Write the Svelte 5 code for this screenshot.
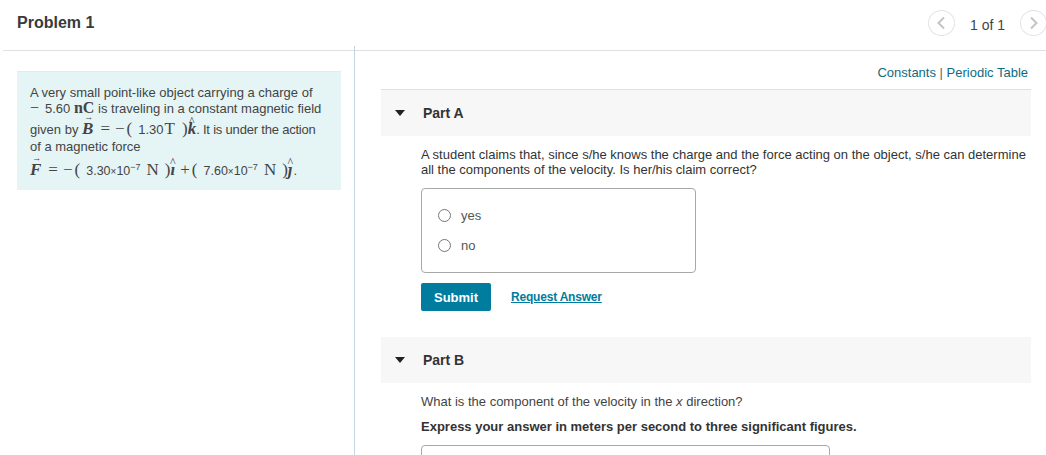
<script>
	let answer = $state('');
	const choices = ['yes', 'no'];
</script>

<div class="page">
	<header class="top">
		<h1>Problem 1</h1>
		<nav class="pager">
			<button class="arrow" aria-label="Previous">
				<svg width="10" height="14" viewBox="0 0 10 14"><path d="M8 1.5 2.5 7 8 12.5" /></svg>
			</button>
			<span>1 of 1</span>
			<button class="arrow" aria-label="Next">
				<svg width="10" height="14" viewBox="0 0 10 14"><path d="M2 1.5 7.5 7 2 12.5" /></svg>
			</button>
		</nav>
	</header>

	<div class="columns">
		<aside class="side">
			<div class="intro">
				<div class="line">A very small point-like object carrying a charge of</div>
				<div class="line second"><span class="m minus">−</span>5.60 <span class="m b">nC</span> is traveling in a constant magnetic field</div>
				<div class="line third">given by <span class="acc vec v">B</span><span class="m op">=</span><span class="m">−</span><span class="m paren">(</span>1.30<span class="m unit">T</span><span class="m paren-end">)</span><span class="acc hat v">k</span><span class="tail">. It is under the action</span></div>
				<div class="line fourth">of a magnetic force</div>
				<div class="line fifth"><span class="acc vec v">F</span><span class="m op">=</span><span class="m">−</span><span class="m paren">(</span><span class="num">3.30<small>×</small>10<sup>−7</sup></span><span class="m unit">N</span><span class="m paren-end">)</span><span class="acc hat v">ı</span><span class="m plus">+</span><span class="m paren">(</span><span class="num">7.60<small>×</small>10<sup>−7</sup></span><span class="m unit">N</span><span class="m paren-end">)</span><span class="acc hat v">ȷ</span><span class="dot">.</span></div>
			</div>
		</aside>

		<main class="main">
			<div class="links"><a href="#c">Constants</a> | <a href="#p">Periodic Table</a></div>

			<section class="part first">
				<div class="part-head"><i class="caret"></i><h2>Part A</h2></div>
				<div class="part-body">
					<p class="q">A student claims that, since s/he knows the charge and the force acting on the object, s/he can determine all the components of the velocity. Is her/his claim correct?</p>
					<div class="choices">
						{#each choices as c}
							<label class="choice">
								<input type="radio" name="a" value={c} bind:group={answer} />
								<span>{c}</span>
							</label>
						{/each}
					</div>
					<div class="actions">
						<button class="submit">Submit</button>
						<a class="req" href="#r">Request Answer</a>
					</div>
				</div>
			</section>

			<section class="part">
				<div class="part-head"><i class="caret"></i><h2>Part B</h2></div>
				<div class="part-body">
					<p class="q2">What is the component of the velocity in the <em>x</em> direction?</p>
					<p class="hint">Express your answer in meters per second to three significant figures.</p>
					<div class="answer-box"></div>
				</div>
			</section>
		</main>
	</div>
</div>

<style>
	:global(body) {
		margin: 0;
		background: #fff;
	}

	.page {
		height: 455px;
		overflow: hidden;
		font-family: 'Liberation Sans', Arial, sans-serif;
		font-size: 13px;
		color: #333;
	}

	.top {
		height: 50px;
		margin-left: 3px;
		padding: 0 0 0 14px;
		display: flex;
		justify-content: space-between;
		align-items: flex-start;
		border-bottom: 1px solid #e0e0e0;
	}

	.top h1 {
		margin: 14px 0 0;
		font-size: 16px;
		line-height: 18px;
		font-weight: bold;
		color: #3a3a3a;
	}

	.pager {
		display: flex;
		align-items: center;
		margin-top: 10px;
		margin-right: -1px;
		font-size: 14px;
		color: #444;
	}

	.pager span {
		margin: 3px 15px 0 15px;
	}

	.arrow {
		width: 27px;
		height: 26px;
		padding: 0;
		border: 1px solid #e4e4e4;
		border-radius: 50%;
		background: #fff;
		display: flex;
		align-items: center;
		justify-content: center;
	}

	.arrow path {
		fill: none;
		stroke: #c4c4c4;
		stroke-width: 2;
	}

	.columns {
		display: flex;
		height: 404px;
	}

	.side {
		width: 355px;
		box-sizing: border-box;
		flex: none;
		margin-top: -5px;
		padding: 25px 13px 0 17px;
		border-right: 1px solid #c3d4e2;
		height: 415px;
	}

	.intro {
		box-sizing: border-box;
		height: 119px;
		padding: 13px 0 0 13px;
		background: #e5f5f6;
		border-top: 1px solid #e4e9e9;
		color: #444;
	}

	.line {
		height: 15px;
		line-height: 15px;
		white-space: nowrap;
	}

	.third {
		height: 20px;
		margin-top: 5px;
	}

	.fourth {
		margin-top: -1px;
	}

	.fifth {
		height: 20px;
		margin-top: 7px;
	}

	.m {
		font-family: 'Liberation Serif', 'Times New Roman', serif;
		font-size: 17px;
	}

	.minus {
		font-size: 16px;
		margin-right: 6px;
	}

	.op {
		margin: 0 5px 0 7px;
	}

	.paren {
		margin: 0 6px 0 2px;
	}

	.paren-end {
		margin-left: 6px;
	}

	.plus {
		margin-left: 5px;
	}

	.unit {
		margin-left: 6px;
	}

	.third .unit {
		margin-left: 1px;
	}

	.third .paren-end {
		margin-left: 7px;
	}

	.tail {
		letter-spacing: -0.2px;
	}

	.dot {
		margin-left: 1px;
	}

	.num {
		font-size: 12.5px;
	}

	.b {
		font-weight: bold;
		font-size: 16px;
	}

	.v {
		font-family: 'Liberation Serif', 'Times New Roman', serif;
		font-style: italic;
		font-weight: bold;
		font-size: 17px;
	}

	.acc {
		position: relative;
		display: inline-block;
		line-height: 1;
	}

	.vec::after {
		content: '→';
		position: absolute;
		left: 2px;
		right: 0;
		top: -7px;
		text-align: center;
		font-size: 9px;
		font-style: normal;
		font-weight: normal;
	}

	.hat::after {
		content: '^';
		position: absolute;
		left: -2px;
		right: -2px;
		top: -5px;
		text-align: center;
		font-size: 12px;
		font-style: normal;
		font-weight: normal;
	}

	small {
		font-size: 10px;
	}

	sup {
		font-size: 9px;
		line-height: 0;
	}

	.main {
		flex: 1;
		padding: 0 15px 0 26px;
		min-width: 0;
	}

	.links {
		height: 38px;
		box-sizing: border-box;
		padding: 15px 3px 0 0;
		text-align: right;
		line-height: 14px;
		color: #666;
	}

	.links a {
		color: #0f6b84;
		text-decoration: none;
	}

	.part-head {
		height: 46px;
		background: #f7f7f7;
		display: flex;
		align-items: center;
		padding-left: 14px;
	}

	.first .part-head {
		border-top: 1px solid #e0e0e0;
	}

	.caret {
		width: 0;
		height: 0;
		border-left: 5px solid transparent;
		border-right: 5px solid transparent;
		border-top: 6px solid #222;
	}

	.part-head h2 {
		margin: 0 0 0 18px;
		font-size: 14px;
		font-weight: bold;
		color: #333;
	}

	.part-body {
		padding: 0 0 0 40px;
	}

	.q {
		margin: 11px 0 0;
		line-height: 15px;
		color: #333;
	}

	.choices {
		box-sizing: border-box;
		width: 275px;
		height: 85px;
		margin-top: 11px;
		padding: 11px 0 0 16px;
		border: 1px solid #a8a8a8;
		border-radius: 4px;
	}

	.choice {
		display: flex;
		align-items: center;
		height: 30px;
		color: #555;
	}

	.choice input {
		appearance: none;
		width: 13px;
		height: 13px;
		margin: 0 10px 0 0;
		border: 1px solid #777;
		border-radius: 50%;
		background: #fff;
	}

	.actions {
		display: flex;
		align-items: center;
		margin-top: 10px;
	}

	.submit {
		width: 70px;
		height: 28px;
		padding: 0;
		border: none;
		border-radius: 2px;
		background: #007c9e;
		color: #fff;
		font: bold 13px 'Liberation Sans', Arial, sans-serif;
	}

	.req {
		margin-left: 20px;
		color: #007c9e;
		font-weight: bold;
		font-size: 12px;
		letter-spacing: -0.2px;
	}

	.part {
		margin-bottom: 26px;
	}

	.q2 {
		margin: 11px 0 0;
		line-height: 15px;
		color: #444;
	}

	.hint {
		margin: 10px 0 0;
		line-height: 15px;
		font-weight: bold;
		color: #333;
	}

	.answer-box {
		width: 409px;
		height: 40px;
		box-sizing: border-box;
		margin-top: 11px;
		border: 1px solid #a8a8a8;
		border-radius: 4px;
	}
</style>
